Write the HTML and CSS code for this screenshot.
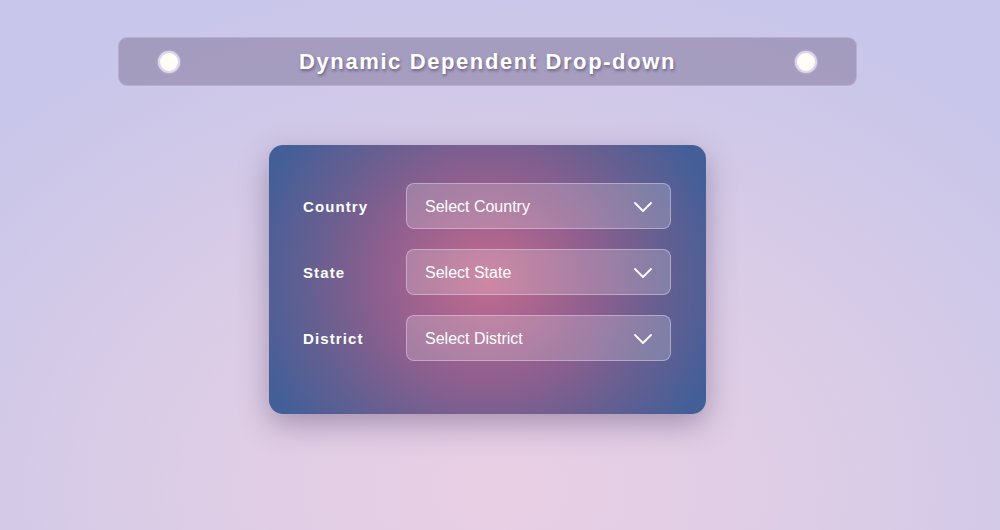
FILE: index.html
```html
<!DOCTYPE html>
<html>
<head>
<meta charset="utf-8">
<link rel="stylesheet" href="styles.css">
</head>
<body>
<div class="page">
  <header class="bar">
    <span class="dot"></span>
    <h1 class="title">Dynamic Dependent Drop-down</h1>
    <span class="dot"></span>
  </header>
  <main class="card">
    <div class="row">
      <label class="label">Country</label>
      <div class="select"><span>Select Country</span>
        <svg class="chev" width="20" height="12" viewBox="0 0 20 12"><path d="M2 2 L10 10 L18 2" fill="none" stroke="#fff" stroke-width="1.8" stroke-linecap="round" stroke-linejoin="round"/></svg>
      </div>
    </div>
    <div class="row">
      <label class="label">State</label>
      <div class="select"><span>Select State</span>
        <svg class="chev" width="20" height="12" viewBox="0 0 20 12"><path d="M2 2 L10 10 L18 2" fill="none" stroke="#fff" stroke-width="1.8" stroke-linecap="round" stroke-linejoin="round"/></svg>
      </div>
    </div>
    <div class="row">
      <label class="label">District</label>
      <div class="select"><span>Select District</span>
        <svg class="chev" width="20" height="12" viewBox="0 0 20 12"><path d="M2 2 L10 10 L18 2" fill="none" stroke="#fff" stroke-width="1.8" stroke-linecap="round" stroke-linejoin="round"/></svg>
      </div>
    </div>
  </main>
</div>
</body>
</html>
```
FILE: styles.css
```css
html, body {
  margin: 0;
  padding: 0;
  width: 1000px;
  height: 530px;
  overflow: hidden;
}
body {
  font-family: "Liberation Sans", Arial, sans-serif;
  background: radial-gradient(ellipse 700px 520px at 500px 490px, #e9cfe4 0%, #ddcde6 45%, #c8c6ea 100%);
}
.page {
  display: flex;
  flex-direction: column;
  align-items: flex-start;
  padding: 37px 0 0 118px;
}
.bar {
  width: 739px;
  height: 49px;
  box-sizing: border-box;
  border-radius: 9px;
  background: rgba(150, 140, 175, 0.72);
  border: 1px solid rgba(190, 182, 215, 0.7);
  display: flex;
  align-items: center;
  justify-content: space-between;
  padding: 0 39px;
}
.dot {
  width: 22px;
  height: 22px;
  border-radius: 50%;
  background: #fffdf6;
  border: 2px solid #ddd6ee;
  box-sizing: border-box;
  box-shadow: 0 0 2px rgba(255,255,255,0.6);
}
.title {
  margin: 0;
  color: #fff;
  font-size: 22px;
  font-weight: bold;
  letter-spacing: 1.6px;
  text-shadow: 1px 2px 3px rgba(60, 50, 90, 0.55);
}
.card {
  margin: 59px 0 0 151px;
  width: 437px;
  height: 269px;
  box-sizing: border-box;
  border-radius: 14px;
  background: radial-gradient(ellipse 240px 230px at 218px 135px, #c26b8e 0%, #8e5f8f 45%, #6a5f90 70%, #445f98 100%);
  box-shadow: 0 10px 30px rgba(90, 70, 110, 0.45);
  padding: 38px 35px 0 34px;
  display: flex;
  flex-direction: column;
  gap: 20px;
}
.row {
  display: flex;
  align-items: center;
}
.label {
  width: 103px;
  color: #fff;
  font-size: 15px;
  font-weight: bold;
  letter-spacing: 1.1px;
}
.select {
  width: 265px;
  height: 46px;
  box-sizing: border-box;
  border-radius: 8px;
  background: rgba(255, 255, 255, 0.2);
  border: 1.5px solid rgba(220, 200, 235, 0.55);
  display: flex;
  align-items: center;
  justify-content: space-between;
  padding: 1px 17px 0 18px;
  color: #fff;
  font-size: 16px;
}
.chev {
  display: block;
}
```
